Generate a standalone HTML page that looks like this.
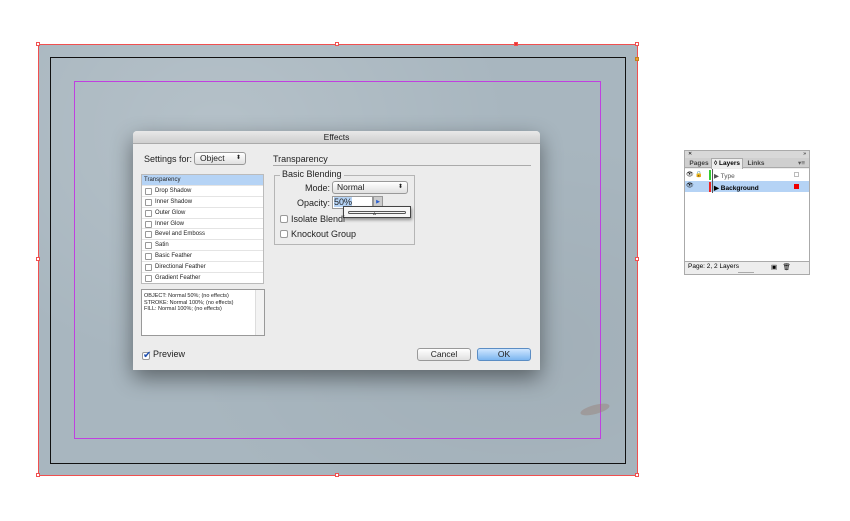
<!DOCTYPE html>
<html><head><style>
*{margin:0;padding:0;box-sizing:border-box}
body{width:850px;height:521px;background:#fff;position:relative;overflow:hidden;font-family:"Liberation Sans",sans-serif}
.a{position:absolute}
.page{left:38px;top:44px;width:600px;height:432px;background:
radial-gradient(ellipse at 30% 20%,rgba(255,255,255,.15),transparent 50%),
radial-gradient(ellipse at 80% 70%,rgba(0,0,0,.04),transparent 50%),#a8b6bf;border:1px solid #f05050}
.h{position:absolute;width:4px;height:4px;border:1px solid #f05050;background:#fff}
.dlg{left:133px;top:131px;width:407px;height:239px;background:#ececec;box-shadow:0 8px 22px rgba(0,0,0,.45);border-radius:4px 4px 0 0;font-size:9px;color:#222}
.tb{left:0;top:0;width:100%;height:13px;background:linear-gradient(#e8e8e8,#cfcfcf);border-bottom:1px solid #aaa;text-align:center;font-size:8.5px;line-height:13px;border-radius:4px 4px 0 0}
.list{left:8px;top:43px;width:123px;height:110px;background:#fff;border:1px solid #bbb}
.row{height:10.9px;border-bottom:1px solid #e4e4e4;font-size:6px;line-height:10px;padding-left:13px;position:relative}
.row i{position:absolute;left:3px;top:2px;width:7px;height:7px;border:1px solid #999;border-radius:1px;background:#fff}
.cb{display:inline-block;width:8px;height:8px;border:1px solid #999;border-radius:2px;background:#fff;vertical-align:-1px;margin-right:3px}
.btn{height:13px;border:1px solid #999;border-radius:3px;background:linear-gradient(#fff,#e0e0e0);text-align:center;font-size:8.5px;line-height:11px}
.lp{left:684px;top:150px;width:126px;height:125px;background:#ededed;border:1px solid #aaa;font-size:6.5px}
</style></head><body>
<div class="a page"></div>
<div class="h" style="left:36px;top:42px"></div><div class="h" style="left:335px;top:42px"></div><div class="h" style="left:514px;top:42px;background:#f03030"></div><div class="h" style="left:635px;top:42px"></div>
<div class="h" style="left:635px;top:57px;background:#f0a030;border-color:#c08020"></div>
<div class="h" style="left:36px;top:257px"></div><div class="h" style="left:635px;top:257px"></div>
<div class="h" style="left:36px;top:473px"></div><div class="h" style="left:335px;top:473px"></div><div class="h" style="left:635px;top:473px"></div>
<div class="a" style="left:50px;top:57px;width:576px;height:407px;border:1px solid #111"></div>
<div class="a" style="left:74px;top:81px;width:527px;height:358px;border:1px solid #c040e0"></div>
<div class="a" style="left:580px;top:405px;width:30px;height:9px;border-radius:50%;background:rgba(150,120,110,.4);transform:rotate(-15deg)"></div>

<div class="a dlg">
<div class="a tb">Effects</div>
<div class="a" style="left:11px;top:23px;font-size:9px">Settings for:</div>
<div class="a btn" style="left:61px;top:21px;width:52px;text-align:left;padding-left:5px">Object<span style="float:right;margin-right:4px;font-size:6px">⬍</span></div>
<div class="a list">
<div class="row" style="background:#b5d3f5;padding-left:2px">Transparency</div>
<div class="row"><i></i>Drop Shadow</div><div class="row"><i></i>Inner Shadow</div><div class="row"><i></i>Outer Glow</div><div class="row"><i></i>Inner Glow</div><div class="row"><i></i>Bevel and Emboss</div><div class="row"><i></i>Satin</div><div class="row"><i></i>Basic Feather</div><div class="row"><i></i>Directional Feather</div><div class="row" style="border:0"><i></i>Gradient Feather</div>
</div>
<div class="a" style="left:8px;top:158px;width:124px;height:47px;background:#fff;border:1px solid #999;font-size:5.5px;line-height:6.5px;padding:3px 2px">OBJECT: Normal 50%; (no effects)<br>STROKE: Normal 100%; (no effects)<br>FILL: Normal 100%; (no effects)<div class="a" style="right:0;top:0;width:9px;height:100%;background:#f3f3f3;border-left:1px solid #ddd"></div></div>
<div class="a" style="left:9px;top:218px;font-size:9px"><span class="cb" style="color:#2050b0;font-size:10px;line-height:6px;text-align:center">✔</span>Preview</div>
<div class="a btn" style="left:284px;top:217px;width:54px">Cancel</div>
<div class="a btn" style="left:344px;top:217px;width:54px;background:linear-gradient(#cfe6ff,#7cb6f0);border-color:#5b8dc4">OK</div>
<div class="a" style="left:140px;top:23px;font-size:9px">Transparency</div>
<div class="a" style="left:140px;top:34px;width:258px;border-top:1px solid #aaa"></div>
<div class="a" style="left:141px;top:44px;width:141px;height:70px;border:1px solid #b5b5b5"></div>
<div class="a" style="left:147px;top:38px;background:#ececec;padding:0 2px;font-size:9px">Basic Blending</div>
<div class="a" style="left:172px;top:52px;font-size:9px">Mode:</div>
<div class="a btn" style="left:199px;top:50px;width:76px;text-align:left;padding-left:4px">Normal<span style="float:right;margin-right:4px;font-size:6px">⬍</span></div>
<div class="a" style="left:164px;top:67px;font-size:9px">Opacity:</div>
<div class="a" style="left:199px;top:65px;width:41px;height:13px;background:#fff;border:1px solid #999;font-size:9px;line-height:11px;padding-left:1px"><span style="background:#b5d3f5">50%</span></div>
<div class="a" style="left:240px;top:65px;width:10px;height:13px;background:#ccc;border:1px solid #999;font-size:5px;color:#2a5fcf;text-align:center;line-height:11px">▶</div>
<div class="a" style="left:210px;top:75px;width:68px;height:12px;background:#f6f6f6;border:1px solid #444;box-shadow:1px 2px 3px rgba(0,0,0,.4)"><div class="a" style="left:4px;top:4px;width:58px;height:3px;border:1px solid #555;border-radius:2px"></div><div class="a" style="left:29px;top:4px;font-size:6px;line-height:6px">▵</div></div>
<div class="a" style="left:147px;top:83px;font-size:9px"><span class="cb"></span>Isolate Blendi</div>
<div class="a" style="left:147px;top:98px;font-size:9px"><span class="cb"></span>Knockout Group</div>
</div>

<div class="a lp">
<div class="a" style="left:0;top:0;width:100%;height:7px;background:#d8d8d8;font-size:5px;line-height:7px;padding-left:3px">✕<span style="float:right;margin-right:3px">»</span></div>
<div class="a" style="left:0;top:7px;width:100%;height:10px;background:#cfcfcf;border-bottom:1px solid #aaa"></div>
<div class="a" style="left:2px;top:8px;width:24px;height:9px;text-align:center;line-height:9px;font-weight:bold;color:#444">Pages</div>
<div class="a" style="left:26px;top:7px;width:32px;height:11px;background:#ededed;border:1px solid #aaa;border-bottom:0;text-align:center;line-height:10px;font-weight:bold">◊ Layers</div>
<div class="a" style="left:59px;top:8px;width:24px;height:9px;text-align:center;line-height:9px;font-weight:bold;color:#444">Links</div>
<div class="a" style="left:113px;top:8px;color:#555">▾≡</div>
<div class="a" style="left:0;top:18px;width:124px;height:92px;background:#fff"></div>
<div class="a" style="left:0;top:30px;width:124px;height:11px;background:#b5d3f5"></div>
<div class="a" style="left:1px;top:20px;font-size:6px">👁 🔒</div>
<div class="a" style="left:1px;top:31px;font-size:6px">👁</div>
<div class="a" style="left:24px;top:19px;width:2px;height:10px;background:#3c3"></div>
<div class="a" style="left:24px;top:31px;width:2px;height:10px;background:#e22"></div>
<div class="a" style="left:27px;top:18px;width:1px;height:24px;background:#555"></div>
<div class="a" style="left:29px;top:21px;color:#555">▶ Type</div>
<div class="a" style="left:29px;top:33px;font-weight:bold">▶ Background</div>
<div class="a" style="left:109px;top:21px;width:5px;height:5px;border:1px solid #bbb"></div>
<div class="a" style="left:109px;top:33px;width:5px;height:5px;background:#e00"></div>
<div class="a" style="left:0;top:110px;width:124px;border-top:1px solid #aaa"></div>
<div class="a" style="left:3px;top:112px">Page: 2, 2 Layers</div>
<div class="a" style="left:86px;top:112px">▣ &nbsp; 🗑</div>
<div class="a" style="left:53px;top:121px;width:16px;border-top:1px solid #aaa"></div>
</div>
</body></html>
